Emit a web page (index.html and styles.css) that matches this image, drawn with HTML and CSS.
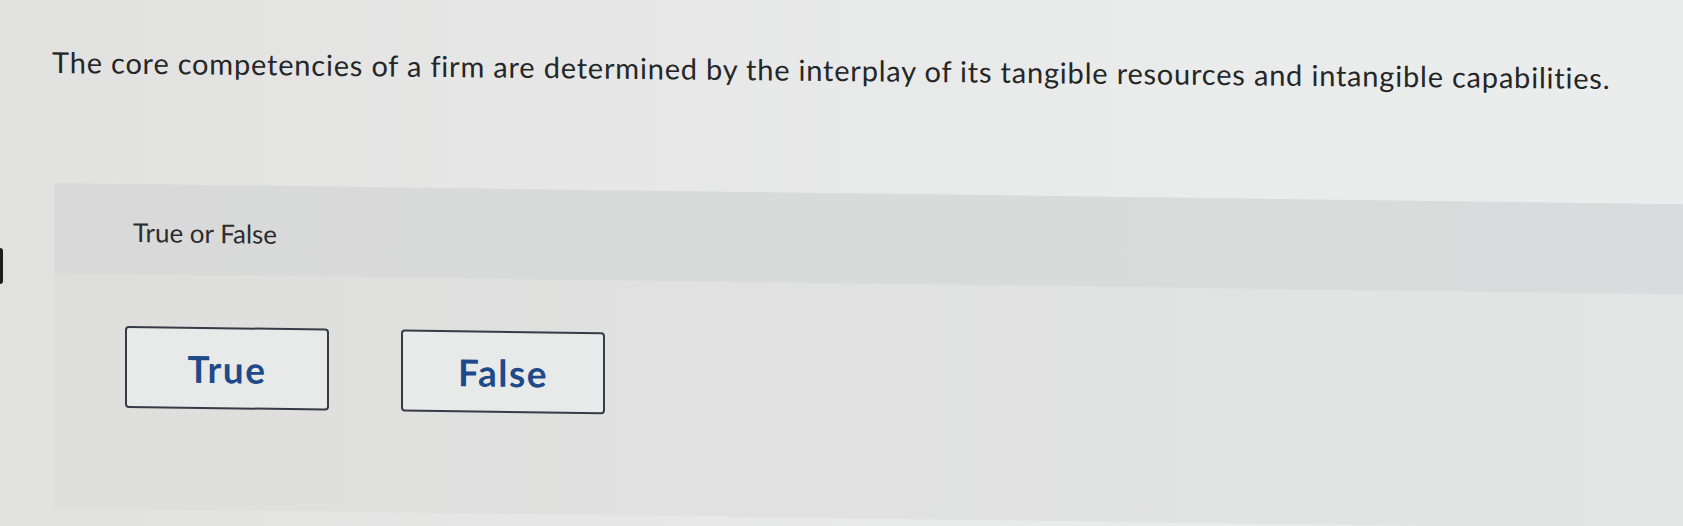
FILE: index.html
```html
<!DOCTYPE html>
<html lang="en">
<head>
<meta charset="UTF-8">
<link rel="stylesheet" href="styles.css">
</head>
<body>

<div class="page">
    <p class="question">The core competencies of a firm are determined by the interplay of its tangible resources and intangible capabilities.</p>

    <div class="answer-panel">
        <div class="answer-head">True or False</div>
        <div class="answer-body">
            <button class="choice">True</button>
            <button class="choice">False</button>
        </div>
    </div>
</div>

<div class="edge-mark"></div>

</body>
</html>
```

FILE: styles.css
```css
* { margin: 0; padding: 0; box-sizing: border-box; }

body {
    height: 526px;
    overflow: hidden;
    font-family: Lato, "Open Sans", sans-serif;
    font-variant-ligatures: none;
    background: linear-gradient(90deg, #e1e2e0 0%, #e6e7e6 35%, #eaeceb 70%, #ebedec 100%);
}

.page {
    padding-top: 44px;
}

.question {
    margin-left: 52px;
    font-size: 29px;
    line-height: 36px;
    letter-spacing: 0.8px;
    color: #252627;
    white-space: nowrap;
    transform: skewY(0.59deg);
    transform-origin: left top;
}

.answer-panel {
    margin: 103px 0 0 54px;
    height: 325px;
    background: linear-gradient(90deg, #dedfdd 0%, #e0e1e0 40%, #e3e5e4 100%);
    transform: skewY(0.75deg);
    transform-origin: left top;
}

.answer-head {
    height: 90px;
    padding: 32px 0 0 79px;
    font-size: 26px;
    line-height: 32px;
    color: #2b2c2d;
    background: linear-gradient(90deg, #d8d9d8 0%, #d9dbda 50%, #d9dcdc 100%);
}

.answer-body {
    display: flex;
    gap: 72px;
    padding: 52px 0 0 71px;
}

.choice {
    width: 204px;
    height: 82px;
    border: 2px solid #363b48;
    border-radius: 4px;
    background: #e8eae9;
    color: #1f4a8a;
    font-family: Lato, "Open Sans", sans-serif;
    font-variant-ligatures: none;
    font-weight: 700;
    font-size: 37px;
    letter-spacing: 1.5px;
    cursor: pointer;
}

/* dark bit of the monitor bezel on the left */
.edge-mark {
    position: absolute;
    left: 0;
    top: 248px;
    width: 3px;
    height: 36px;
    border-radius: 0 3px 3px 0;
    background: #1c1c1c;
}
```
